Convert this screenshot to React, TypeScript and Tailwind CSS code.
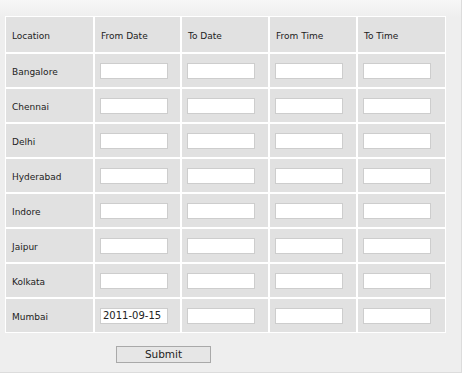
const locations = ["Bangalore", "Chennai", "Delhi", "Hyderabad", "Indore", "Jaipur", "Kolkata", "Mumbai"];
const headers = ["Location", "From Date", "To Date", "From Time", "To Time"];

function Field({ value = "" }: { value?: string }) {
  return (
    <input
      type="text"
      defaultValue={value}
      className="ml-[5px] h-[16px] w-[68px] border border-[#cdcdcd] bg-white px-[2px] text-[10px] text-[#222] outline-none"
    />
  );
}

export default function App() {
  return (
    <div className="min-h-[379px] bg-white" style={{ fontFamily: '"DejaVu Sans", Verdana, sans-serif' }}>
      <div className="h-[373px] w-[462px] border-r border-b border-[#dcdcdc] bg-[linear-gradient(#f7f7f7,#eeeeee_18px)] pt-[16px]">
        <div className="ml-[5px] grid w-[441px] grid-cols-[87px_85px_86px_86px_87px] grid-rows-[35px_repeat(8,33px)] gap-[2px] bg-white p-[1px]">
          {headers.map((h) => (
            <div key={h} className="flex items-center bg-[#e1e1e1] pl-[6px] pt-[4px] text-[9px] text-[#222]">
              {h}
            </div>
          ))}
          {locations.map((loc) => (
            <div key={loc} className="contents">
              <div className="flex items-center bg-[#e1e1e1] pl-[6px] pt-[4px] text-[9px] text-[#222]">{loc}</div>
              {[0, 1, 2, 3].map((i) => (
                <div key={i} className="flex items-center bg-[#e1e1e1]">
                  <Field value={loc === "Mumbai" && i === 0 ? "2011-09-15" : ""} />
                </div>
              ))}
            </div>
          ))}
        </div>
        <button
          type="button"
          className="ml-[116px] mt-[13px] flex h-[17px] w-[95px] items-center justify-center border border-[#a9a9a9] bg-[#e6e6e6] text-[10.5px] text-[#222]"
        >
          Submit
        </button>
      </div>
    </div>
  );
}
